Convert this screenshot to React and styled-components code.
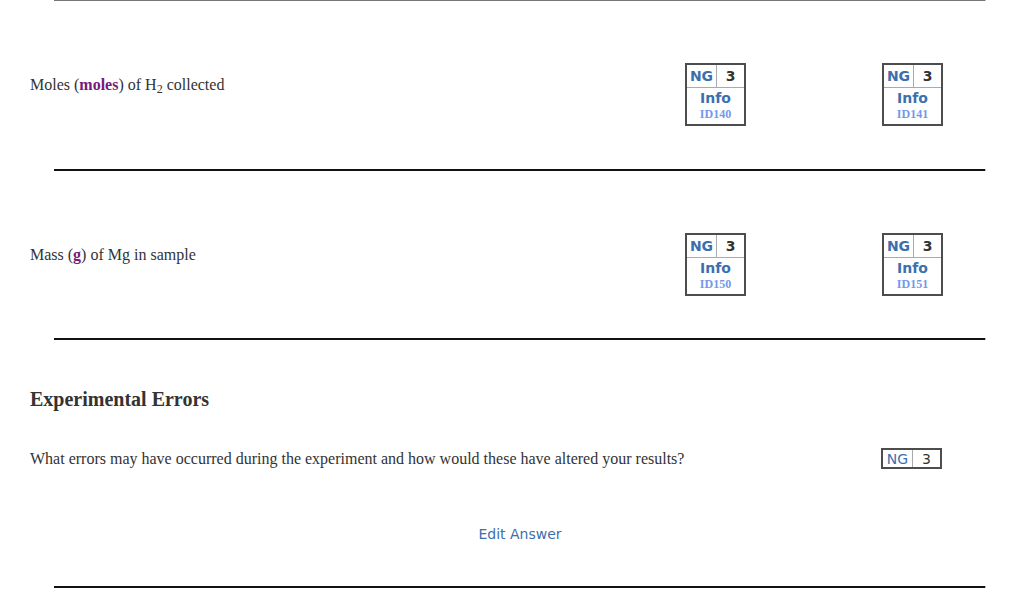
import React from "react";
import styled, { createGlobalStyle } from "styled-components";

const GlobalStyle = createGlobalStyle`
  body {
    margin: 0;
    background: #fff;
    font-family: "Liberation Serif", "Times New Roman", serif;
    color: #333;
  }
`;

const Page = styled.div`
  width: 1024px;
  height: 596px;
  overflow: hidden;
`;

const Rule = styled.div`
  margin: 0 38px 0 54px;
  height: ${({ $thin }) => ($thin ? "1px" : "2px")};
  background: ${({ $thin }) => ($thin ? "#777" : "#111")};
  border-right: 1px solid #bbb;
`;

const Row = styled.div`
  display: grid;
  grid-template-columns: 655px 197px 61px;
  align-items: start;
  height: ${({ $height }) => $height}px;
  padding: ${({ $top }) => $top}px 0 0 30px;
  box-sizing: border-box;
`;

const Label = styled.div`
  margin-top: 13px;
  font-size: 16px;
  line-height: 18px;
  color: #333;

  sub {
    font-size: 12px;
    line-height: 0;
    vertical-align: -3px;
  }
`;

const Unit = styled.span`
  color: #7a1a7a;
  font-weight: bold;
`;

const NgBox = styled.div`
  width: 61px;
  border: 2px solid #4d4d4d;
  box-sizing: border-box;
  font-family: "DejaVu Sans", Verdana, sans-serif;
`;

const NgTop = styled.div`
  display: grid;
  grid-template-columns: 29px 1fr;
  height: ${({ $small }) => ($small ? "17px" : "22px")};
  border-bottom: ${({ $small }) => ($small ? "none" : "1px solid #aaa")};
`;

const NgCell = styled.div`
  display: flex;
  align-items: center;
  justify-content: center;
  font-size: 14px;
  font-weight: ${({ $small }) => ($small ? "normal" : "bold")};
  color: ${({ $blue }) => ($blue ? "#3c6fae" : "#333")};
  border-left: ${({ $divider }) => ($divider ? "1px solid #aaa" : "none")};
`;

const InfoCell = styled.div`
  display: flex;
  flex-direction: column;
  align-items: center;
  padding: 2px 0 2px;
  height: 36px;
  box-sizing: border-box;
`;

const InfoText = styled.span`
  font-size: 14px;
  font-weight: bold;
  line-height: 17px;
  color: #3c6fae;
`;

const IdText = styled.span`
  font-family: "Liberation Serif", "Times New Roman", serif;
  font-size: 12px;
  font-weight: bold;
  line-height: 14px;
  color: #7399ec;
`;

const Heading = styled.h2`
  margin: 0;
  padding: 47px 0 0 30px;
  font-size: 20px;
  line-height: 24px;
  font-weight: bold;
  color: #333;
`;

const Question = styled.div`
  display: grid;
  grid-template-columns: 851px 61px;
  align-items: center;
  padding: 37px 0 0 30px;
  font-size: 16px;
  color: #333;
`;

const EditLink = styled.a`
  display: block;
  margin: 57px 38px 0 54px;
  height: 60px;
  text-align: center;
  font-family: "DejaVu Sans", Verdana, sans-serif;
  font-size: 14px;
  line-height: 16px;
  color: #3c6fae;
  text-decoration: none;
  cursor: pointer;
`;

const Box = ({ id }) => (
  <NgBox>
    <NgTop>
      <NgCell $blue>NG</NgCell>
      <NgCell $divider>3</NgCell>
    </NgTop>
    <InfoCell>
      <InfoText>Info</InfoText>
      <IdText>ID{id}</IdText>
    </InfoCell>
  </NgBox>
);

const SmallBox = () => (
  <NgBox>
    <NgTop $small>
      <NgCell $blue $small>NG</NgCell>
      <NgCell $divider $small>3</NgCell>
    </NgTop>
  </NgBox>
);

const App = () => (
  <Page>
    <GlobalStyle />
    <Rule $thin />
    <Row $height={168} $top={62}>
      <Label>
        Moles (<Unit>moles</Unit>) of H<sub>2</sub> collected
      </Label>
      <Box id={140} />
      <Box id={141} />
    </Row>
    <Rule />
    <Row $height={167} $top={62}>
      <Label>
        Mass (<Unit>g</Unit>) of Mg in sample
      </Label>
      <Box id={150} />
      <Box id={151} />
    </Row>
    <Rule />
    <Heading>Experimental Errors</Heading>
    <Question>
      <span>What errors may have occurred during the experiment and how would these have altered your results?</span>
      <SmallBox />
    </Question>
    <EditLink>Edit Answer</EditLink>
    <Rule />
  </Page>
);

export default App;
